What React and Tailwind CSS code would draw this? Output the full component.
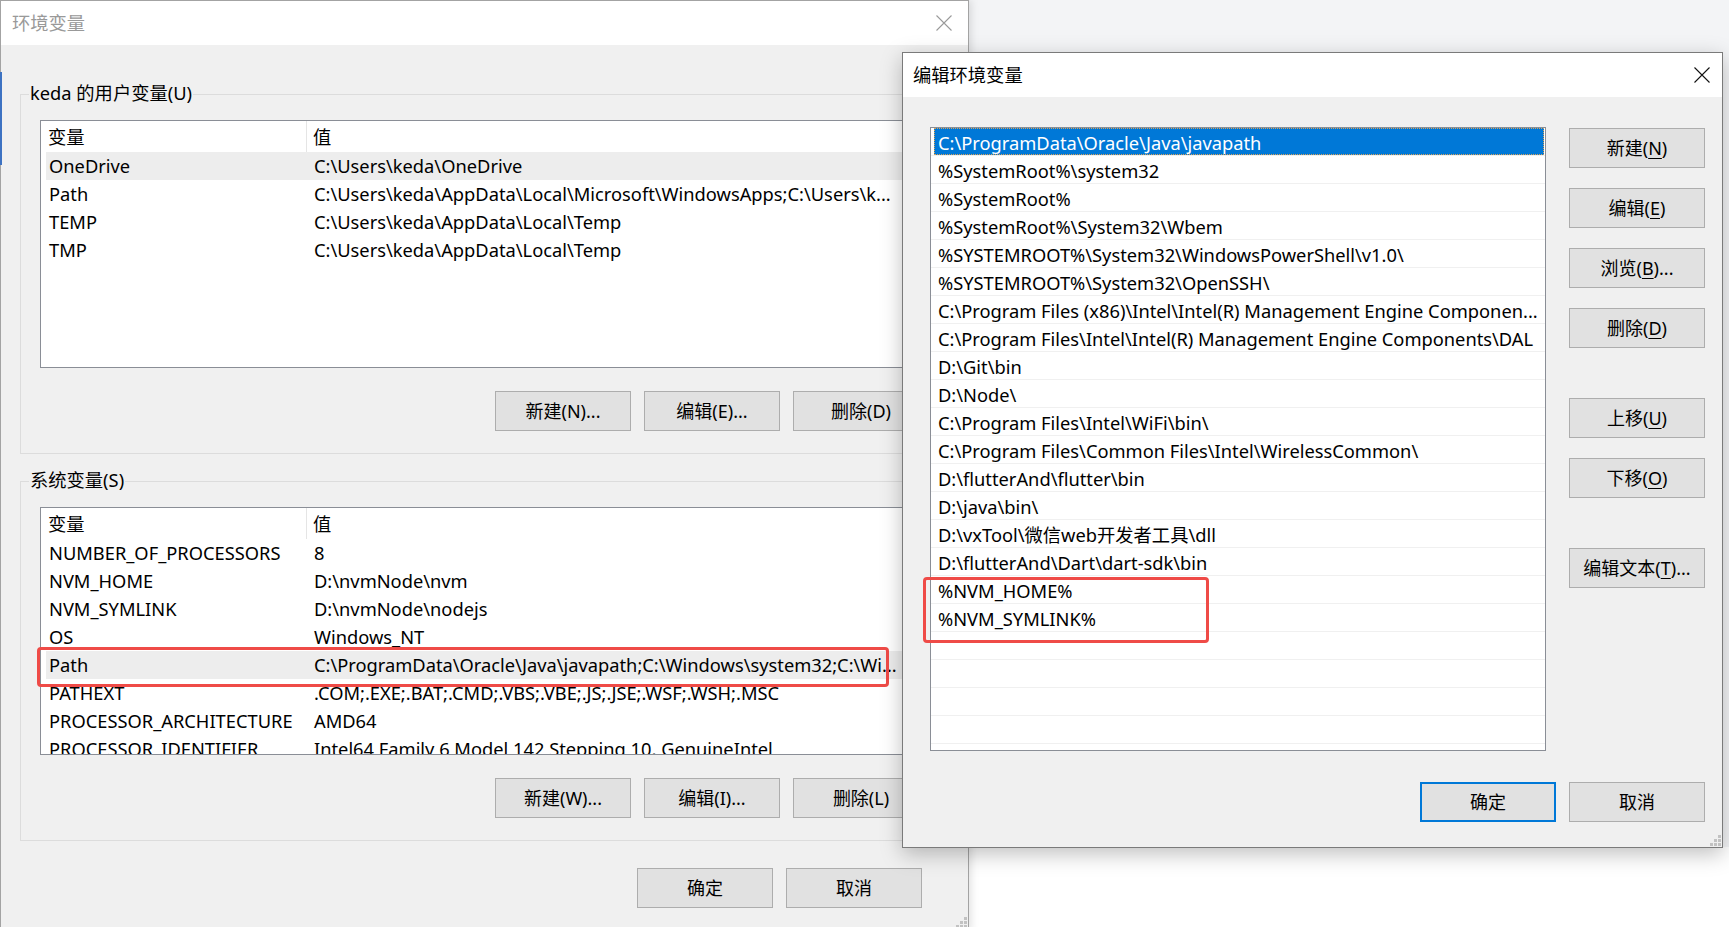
import React from "react";

const win = (s) => s.replaceAll("/", "\\");

const userVars = [
  ["OneDrive", "C:/Users/keda/OneDrive"],
  ["Path", "C:/Users/keda/AppData/Local/Microsoft/WindowsApps;C:/Users/k..."],
  ["TEMP", "C:/Users/keda/AppData/Local/Temp"],
  ["TMP", "C:/Users/keda/AppData/Local/Temp"],
];

const sysVars = [
  ["NUMBER_OF_PROCESSORS", "8"],
  ["NVM_HOME", "D:/nvmNode/nvm"],
  ["NVM_SYMLINK", "D:/nvmNode/nodejs"],
  ["OS", "Windows_NT"],
  ["Path", "C:/ProgramData/Oracle/Java/javapath;C:/Windows/system32;C:/Wi..."],
  ["PATHEXT", ".COM;.EXE;.BAT;.CMD;.VBS;.VBE;.JS;.JSE;.WSF;.WSH;.MSC"],
  ["PROCESSOR_ARCHITECTURE", "AMD64"],
  ["PROCESSOR_IDENTIFIER", "Intel64 Family 6 Model 142 Stepping 10, GenuineIntel"],
];

const paths = [
  "C:/ProgramData/Oracle/Java/javapath",
  "%SystemRoot%/system32",
  "%SystemRoot%",
  "%SystemRoot%/System32/Wbem",
  "%SYSTEMROOT%/System32/WindowsPowerShell/v1.0/",
  "%SYSTEMROOT%/System32/OpenSSH/",
  "C:/Program Files (x86)/Intel/Intel(R) Management Engine Componen...",
  "C:/Program Files/Intel/Intel(R) Management Engine Components/DAL",
  "D:/Git/bin",
  "D:/Node/",
  "C:/Program Files/Intel/WiFi/bin/",
  "C:/Program Files/Common Files/Intel/WirelessCommon/",
  "D:/flutterAnd/flutter/bin",
  "D:/java/bin/",
  "D:/vxTool/微信web开发者工具/dll",
  "D:/flutterAnd/Dart/dart-sdk/bin",
  "%NVM_HOME%",
  "%NVM_SYMLINK%",
  "",
  "",
  "",
  "",
  "",
];

function CloseX({ color }) {
  return (
    <svg width="16" height="16" viewBox="0 0 16 16">
      <path d="M0.5 0.5 L15.5 15.5 M15.5 0.5 L0.5 15.5" stroke={color} strokeWidth="1.1" fill="none" />
    </svg>
  );
}

function Grip() {
  const dots = [
    [9, 1],
    [5, 5],
    [9, 5],
    [1, 9],
    [5, 9],
    [9, 9],
  ];
  return (
    <svg width="12" height="12" viewBox="0 0 12 12">
      {dots.map(([x, y]) => (
        <rect key={`${x}-${y}`} x={x} y={y} width="3" height="3" fill="#c2c2c2" />
      ))}
    </svg>
  );
}

function WinButton({ children, focused }) {
  return (
    <button
      type="button"
      className={`flex h-[40px] w-[136px] items-center justify-center bg-[#e1e1e1] text-[18px] text-black ${
        focused ? "border-2 border-[#0078d7]" : "border border-[#adadad]"
      }`}
    >
      {children}
    </button>
  );
}

function Key({ children }) {
  return <span className="underline underline-offset-[3px]">{children}</span>;
}

function VarList({ rows, highlight }) {
  return (
    <div className="h-[248px] overflow-hidden border border-[#8a8e96] bg-white">
      <div className="flex h-[31px]">
        <div className="flex h-full w-[266px] items-center border-r border-[#e5e5e5] pl-[7px] pt-[1px]">变量</div>
        <div className="flex items-center pl-[6px] pt-[1px]">值</div>
      </div>
      {rows.map(([name, value], i) => (
        <div
          key={name}
          className={`ml-[5px] flex h-[28px] items-center whitespace-nowrap ${i === highlight ? "bg-[#ededed]" : ""}`}
        >
          <div className="w-[265px] pl-[3px]">{name}</div>
          <div className="pl-[3px]">{win(value)}</div>
        </div>
      ))}
    </div>
  );
}

function GroupBox({ label, children }) {
  return (
    <div className="relative border border-[#dcdcdc] px-[19px] pt-[25px] pb-[22px]">
      <span className="absolute left-[8px] top-[-15px] bg-[#f0f0f0] px-[1px] leading-[26px]">{label}</span>
      {children}
    </div>
  );
}

function EnvDialog() {
  return (
    <div className="absolute left-0 top-0 flex h-[932px] w-[969px] flex-col border-x border-t border-[#a3a3a3] bg-[#f0f0f0] shadow-[2px_0_8px_rgba(0,0,0,0.12)]">
      <div className="flex h-[44px] items-center justify-between bg-white pl-[11px] pr-[16px] text-[#999999]">
        <span>环境变量</span>
        <CloseX color="#9a9a9a" />
      </div>
      <div className="relative flex-1 px-[19px]">
        <div className="mt-[49px]">
          <GroupBox label="keda 的用户变量(U)">
            <VarList rows={userVars} highlight={0} />
            <div className="mt-[23px] flex justify-end gap-[13px]">
              <WinButton>新建(N)...</WinButton>
              <WinButton>编辑(E)...</WinButton>
              <WinButton>删除(D)</WinButton>
            </div>
          </GroupBox>
        </div>
        <div className="mt-[27px]">
          <GroupBox label="系统变量(S)">
            <VarList rows={sysVars} highlight={4} />
            <div className="mt-[23px] flex justify-end gap-[13px]">
              <WinButton>新建(W)...</WinButton>
              <WinButton>编辑(I)...</WinButton>
              <WinButton>删除(L)</WinButton>
            </div>
          </GroupBox>
        </div>
        <div className="mt-[27px] flex justify-end gap-[13px] pr-[27px]">
          <WinButton>确定</WinButton>
          <WinButton>取消</WinButton>
        </div>
        <div className="absolute bottom-[4px] right-[1px]">
          <Grip />
        </div>
      </div>
      {/* 红框标注 */}
      <div className="pointer-events-none absolute left-[36px] top-[646px] h-[40px] w-[852px] rounded-[4px] border-[3px] border-[#ef4b47]" />
    </div>
  );
}

function EditDialog() {
  return (
    <div className="absolute left-[902px] top-[52px] flex h-[796px] w-[821px] flex-col border border-[#7a7a7a] bg-[#f0f0f0] shadow-[0_6px_20px_rgba(0,0,0,0.25)]">
      <div className="flex h-[44px] items-center justify-between bg-white pl-[10px] pr-[12px] text-black">
        <span>编辑环境变量</span>
        <CloseX color="#111111" />
      </div>
      <div className="relative flex-1 pl-[27px] pr-[17px] pt-[30px]">
        <div className="flex gap-[23px]">
          <div className="h-[624px] w-[616px] overflow-hidden border border-[#8a8e96] bg-white">
            {paths.map((p, i) => (
              <div key={i} className="h-[28px] border-b border-[#f0f0f0] whitespace-nowrap">
                {i === 0 ? (
                  <div className="ml-[3px] mr-[1px] flex h-[27px] items-center border border-dotted border-[#d9a35a] bg-[#0078d7] pl-[3px] pt-[2px] text-white">
                    {win(p)}
                  </div>
                ) : (
                  <div className="flex h-[27px] items-center pl-[7px] pt-[2px]">{win(p)}</div>
                )}
              </div>
            ))}
          </div>
          <div className="flex w-[136px] flex-col pt-[1px]">
            <WinButton>
              新建(<Key>N</Key>)
            </WinButton>
            <div className="mt-[20px]">
              <WinButton>
                编辑(<Key>E</Key>)
              </WinButton>
            </div>
            <div className="mt-[20px]">
              <WinButton>
                浏览(<Key>B</Key>)...
              </WinButton>
            </div>
            <div className="mt-[20px]">
              <WinButton>
                删除(<Key>D</Key>)
              </WinButton>
            </div>
            <div className="mt-[50px]">
              <WinButton>
                上移(<Key>U</Key>)
              </WinButton>
            </div>
            <div className="mt-[20px]">
              <WinButton>
                下移(<Key>O</Key>)
              </WinButton>
            </div>
            <div className="mt-[50px]">
              <WinButton>
                编辑文本(<Key>T</Key>)...
              </WinButton>
            </div>
          </div>
        </div>
        <div className="mt-[31px] flex justify-end gap-[13px]">
          <WinButton focused>确定</WinButton>
          <WinButton>取消</WinButton>
        </div>
        <div className="absolute bottom-[1px] right-[1px]">
          <Grip />
        </div>
      </div>
      {/* 红框标注 */}
      <div className="pointer-events-none absolute left-[20px] top-[524px] h-[66px] w-[286px] rounded-[4px] border-[3px] border-[#ef4b47]" />
    </div>
  );
}

export default function App() {
  return (
    <div className="relative h-[927px] w-[1729px] overflow-hidden font-['Noto_Sans','Noto_Sans_CJK_SC',sans-serif] text-[18.3px] text-black">
      <div className="flex h-full flex-col">
        <div className="h-[847px] bg-[#f3f4f6]" />
        <div className="flex-1 bg-white" />
      </div>
      <EnvDialog />
      <div className="absolute left-0 top-[72px] h-[93px] w-[2px] bg-[#3d72c2]" />
      <EditDialog />
    </div>
  );
}
